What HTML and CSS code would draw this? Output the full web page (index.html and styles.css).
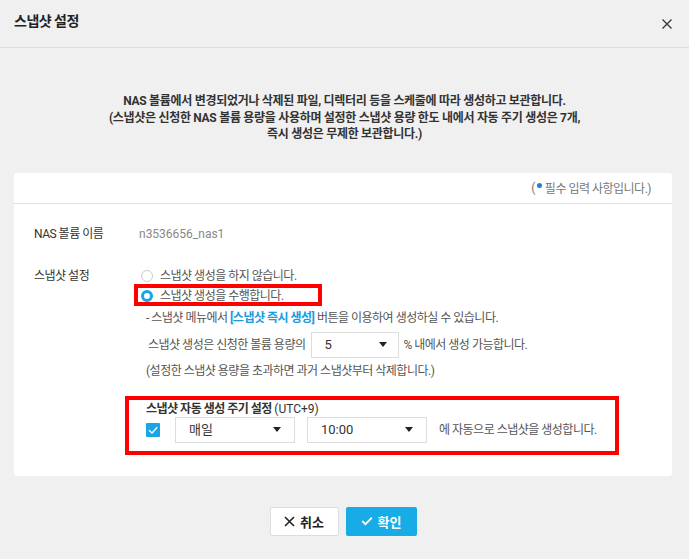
FILE: index.html
```html
<!DOCTYPE html>
<html lang="ko">
<head>
  <meta charset="UTF-8">
  <title>스냅샷 설정</title>
  <link rel="stylesheet" href="styles.css">
</head>
<body>
  <div class="header">
    <h1 class="title">스냅샷 설정</h1>
    <button class="close" type="button">
      <svg width="10" height="10" viewBox="0 0 10 10"><path d="M0.5 0.5 L9.5 9.5 M9.5 0.5 L0.5 9.5" stroke="#333" stroke-width="1.3" fill="none"/></svg>
    </button>
  </div>

  <p class="desc">
    NAS 볼륨에서 변경되었거나 삭제된 파일, 디렉터리 등을 스케줄에 따라 생성하고 보관합니다.<br>
    (스냅샷은 신청한 NAS 볼륨 용량을 사용하며 설정한 스냅샷 용량 한도 내에서 자동 주기 생성은 7개,<br>
    즉시 생성은 무제한 보관합니다.)
  </p>

  <div class="card">
    <div class="card-head">(<span class="dot"></span>필수 입력 사항입니다.)</div>
    <div class="card-body">
      <div class="row">
        <div class="label">NAS 볼륨 이름</div>
        <div class="value muted latin">n3536656_nas1</div>
      </div>

      <div class="row row-snap">
        <div class="label">스냅샷 설정</div>
        <div class="value">
          <label class="radio"><span class="circle"></span>스냅샷 생성을 하지 않습니다.</label>
          <label class="radio"><span class="circle on"></span>스냅샷 생성을 수행합니다.</label>
          <span class="mark mark-radio"></span>
          <div class="note">- 스냅샷 메뉴에서 <b class="link">[스냅샷 즉시 생성]</b> 버튼을 이용하여 생성하실 수 있습니다.</div>
          <div class="cap">
            스냅샷 생성은 신청한 볼륨 용량의
            <div class="select sel-small"><span>5</span><i class="arrow"></i></div>
            % 내에서 생성 가능합니다.
          </div>
          <div class="note">(설정한 스냅샷 용량을 초과하면 과거 스냅샷부터 삭제합니다.)</div>

          <div class="auto">
            <div class="auto-title"><b>스냅샷 자동 생성 주기 설정</b> <span class="latin">(UTC+9)</span></div>
            <div class="auto-row">
              <span class="check">
                <svg width="14" height="14" viewBox="0 0 14 14"><path d="M3 7.2 L6 10 L11.2 4.2" stroke="#fff" stroke-width="1.3" fill="none"/></svg>
              </span>
              <div class="select"><span>매일</span><i class="arrow"></i></div>
              <div class="select"><span>10:00</span><i class="arrow"></i></div>
              <span class="auto-text">에 자동으로 스냅샷을 생성합니다.</span>
            </div>
          </div>
        </div>
      </div>
    </div>
  </div>

  <div class="actions">
    <button class="btn btn-cancel" type="button">
      <svg width="11" height="11" viewBox="0 0 11 11"><path d="M1 1 L10 10 M10 1 L1 10" stroke="#222" stroke-width="1.6" fill="none"/></svg>
      취소
    </button>
    <button class="btn btn-ok" type="button">
      <svg width="12" height="10" viewBox="0 0 12 10"><path d="M1.2 5 L4.5 8.2 L10.8 1.6" stroke="#fff" stroke-width="1.8" fill="none"/></svg>
      확인
    </button>
  </div>
</body>
</html>
```

FILE: styles.css
```css
body {
  margin: 0;
  background: #f0f0f0;
  font-family: Roboto, "Noto Sans CJK KR", sans-serif;
  font-size: 12px;
  letter-spacing: -0.5px;
  color: #333;
}

.latin {
  letter-spacing: 0;
}

.header {
  height: 47px;
  border-bottom: 1px solid #dcdcdc;
  display: flex;
  align-items: center;
  justify-content: space-between;
  padding: 0 14px;
}

.title {
  margin: 0 0 7px;
  font-size: 14px;
  font-weight: bold;
  color: #222;
}

.close {
  border: 0;
  background: none;
  padding: 0;
  margin: 0 3px 0 0;
  display: flex;
}

.desc {
  margin: 45px 0 30px;
  text-align: center;
  font-weight: bold;
  line-height: 16.5px;
  letter-spacing: -0.3px;
  color: #333;
}

.card {
  margin: 0 17px 0 14px;
  background: #fff;
  border-radius: 3px;
}

.card-head {
  height: 30px;
  border-bottom: 1px solid #e2e2e2;
  display: flex;
  align-items: center;
  justify-content: flex-end;
  padding-right: 21px;
  color: #777;
}

.dot {
  width: 5px;
  height: 5px;
  border-radius: 50%;
  background: #1a7fe0;
  margin: 0 3px 4px 2px;
}

.card-body {
  padding: 20px 20px 21px;
}

.row {
  display: flex;
  line-height: 20px;
}

.row-snap {
  margin-top: 22px;
}

.label {
  width: 105px;
  color: #333;
}

.value {
  flex: 1;
  position: relative;
}

.muted {
  color: #888;
}

.radio {
  display: flex;
  align-items: center;
  color: #555;
  padding-left: 2px;
}

.circle {
  width: 12px;
  height: 12px;
  border: 1px solid #ccc;
  border-radius: 50%;
  margin-right: 7px;
  box-sizing: border-box;
}

.circle.on {
  border: 3.5px solid #1aa5e6;
}

.mark {
  position: absolute;
  border: 4px solid #f00;
}

.mark-radio {
  left: -5px;
  top: 18px;
  width: 180px;
  height: 14px;
}

.note {
  padding-left: 7px;
  color: #555;
  margin-top: 2px;
}

.link {
  color: #1a9be0;
}

.cap {
  display: flex;
  align-items: center;
  padding-left: 9px;
  margin: 4px 0 3px;
  color: #555;
}

.select {
  width: 120px;
  height: 26px;
  border: 1px solid #ddd;
  background: #fff;
  display: flex;
  align-items: center;
  justify-content: space-between;
  padding: 0 13px 0 13px;
  box-sizing: border-box;
  font-size: 13px;
  letter-spacing: 0;
  color: #333;
}

.sel-small {
  width: 88px;
  padding: 0 11px 0 12px;
  margin: 0 4px 0 6px;
}

.arrow {
  width: 0;
  height: 0;
  border-left: 4px solid transparent;
  border-right: 4px solid transparent;
  border-top: 5px solid #222;
}

.auto {
  margin: 15px 0 0 -14px;
  width: 494px;
  box-sizing: border-box;
  border: 4px solid #f00;
  padding: 1px 0 8px 17px;
}

.auto-title {
  color: #333;
  line-height: 16px;
}

.auto-row {
  display: flex;
  align-items: center;
  gap: 12px;
}

.check {
  width: 14px;
  height: 14px;
  background: #1aa5e6;
  border-radius: 1px;
  display: flex;
  margin-right: 3px;
}

.auto-text {
  color: #555;
}

.actions {
  display: flex;
  justify-content: center;
  gap: 7px;
  margin-top: 31px;
  padding-right: 3px;
}

.btn {
  height: 29px;
  border-radius: 2px;
  font-family: inherit;
  font-size: 13px;
  font-weight: bold;
  display: flex;
  align-items: center;
  justify-content: center;
  gap: 5px;
}

.btn-cancel {
  width: 69px;
  background: #fff;
  border: 1px solid #ddd;
  color: #222;
}

.btn-ok {
  width: 71px;
  background: #17ace6;
  border: 0;
  color: #fff;
}
```
